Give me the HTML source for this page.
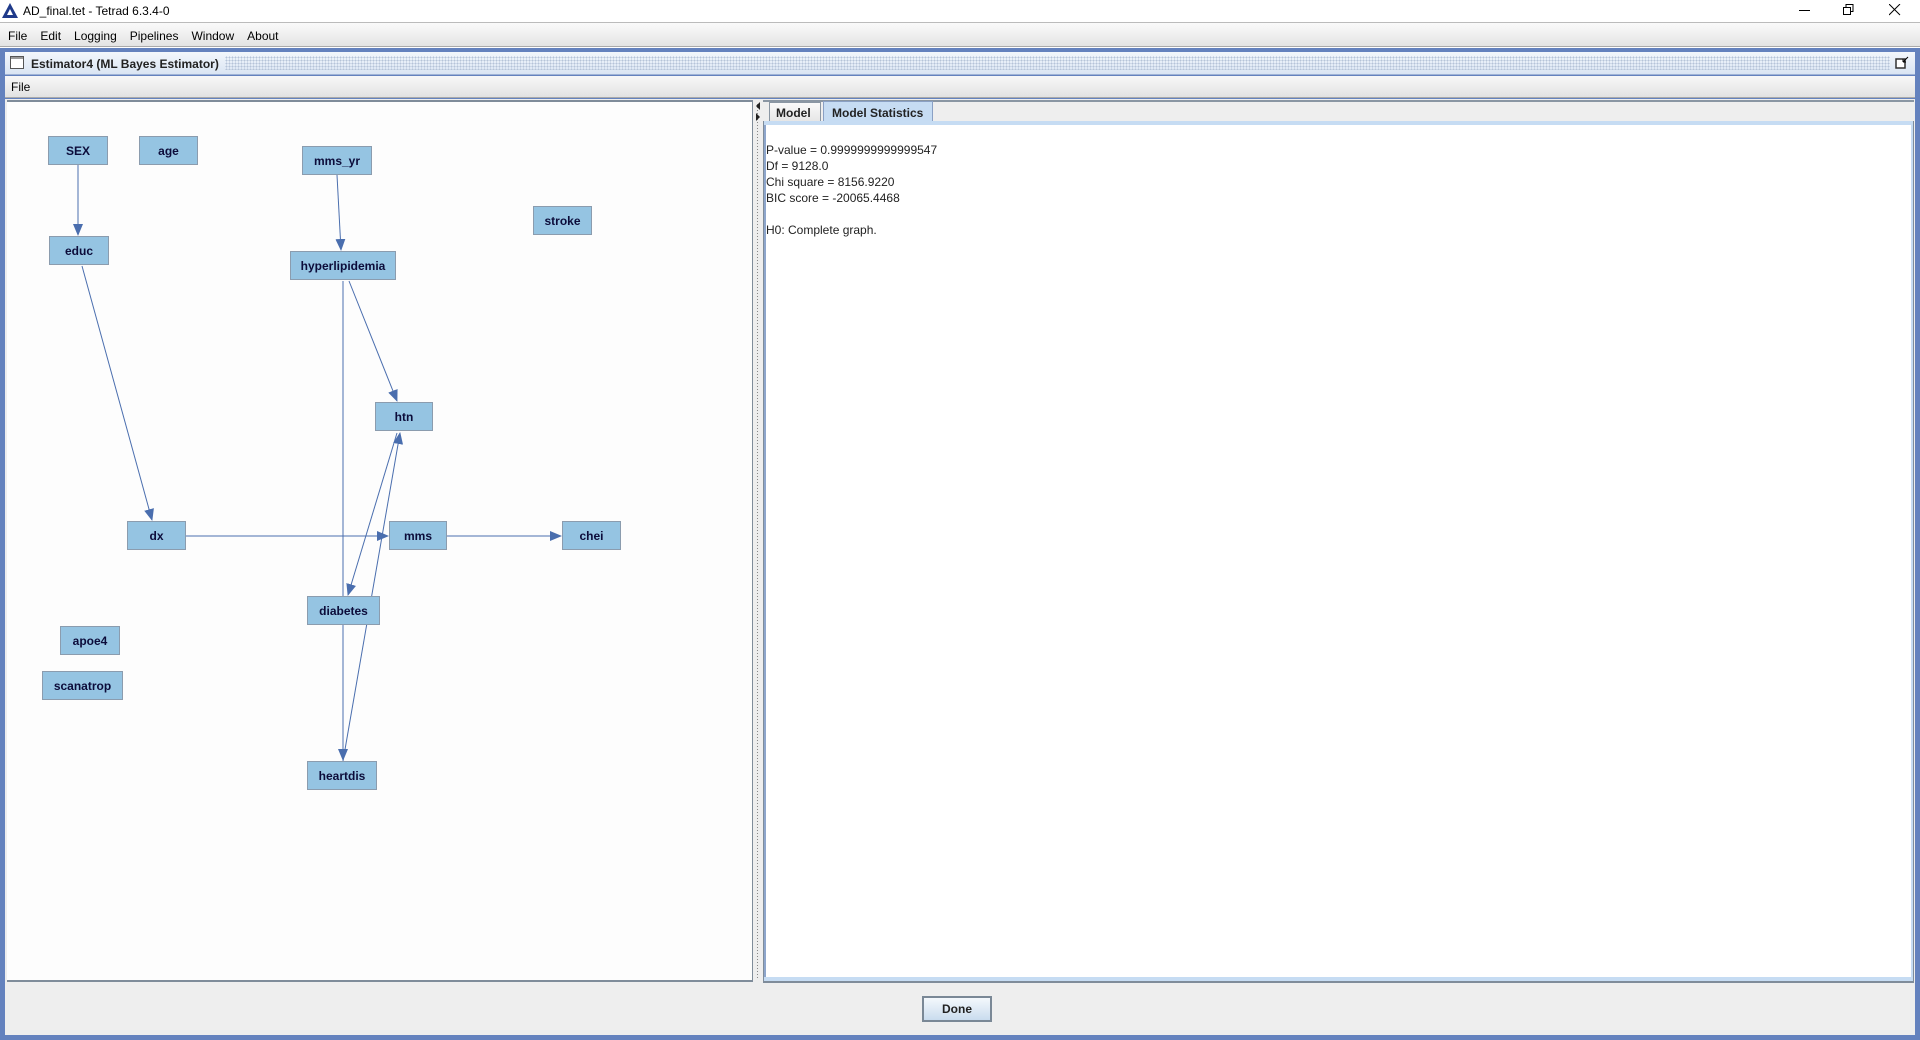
<!DOCTYPE html>
<html><head><meta charset="utf-8"><style>
*{margin:0;padding:0;box-sizing:border-box}
body{width:1920px;height:1040px;overflow:hidden;background:#fff;font-family:"Liberation Sans",Arial,sans-serif;position:relative}
.abs{position:absolute}
.menu span{margin-right:13px}
.node{position:absolute;background:#95c4e2;border:1px solid #8b9cae;color:#0c0c3a;font-weight:bold;font-size:12px;display:flex;align-items:center;justify-content:center}
</style></head><body>
<!-- title bar -->
<div class="abs" style="left:0;top:0;width:1920px;height:22px;background:#fff"></div>
<svg class="abs" style="left:2px;top:3px" width="16" height="15"><polygon points="8,0 16,15 0,15" fill="#1f3a8a"/><polygon points="8,6 11,12 5,12" fill="#fff"/></svg>
<div class="abs" style="left:23px;top:4px;font-size:12px;color:#000">AD_final.tet - Tetrad 6.3.4-0</div>
<div class="abs" style="left:1799px;top:10px;width:11px;height:1px;background:#000"></div>
<svg class="abs" style="left:1843px;top:4px" width="12" height="12"><rect x="0.5" y="3.5" width="7" height="7" fill="none" stroke="#000"/><path d="M3 3.5V0.5h7v7H7.5" fill="none" stroke="#000"/></svg>
<svg class="abs" style="left:1889px;top:4px" width="12" height="12"><path d="M0 0L11 11M11 0L0 11" stroke="#000"/></svg>
<!-- menubar -->
<div class="abs menu" style="left:0;top:22px;width:1920px;height:25px;background:linear-gradient(#fafafa,#e4e4e4);border-top:1px solid #bbb;border-bottom:1px solid #aaa;font-size:12px;padding:6px 0 0 8px"><span>File</span><span>Edit</span><span>Logging</span><span>Pipelines</span><span>Window</span><span>About</span></div>
<!-- internal frame -->
<div class="abs" style="left:0;top:48px;width:1920px;height:992px;background:#6482be"></div>
<div class="abs" style="left:5px;top:52px;width:1910px;height:23px;background:linear-gradient(#f3f7fc,#dae5f3);border-bottom:1px solid #9fb3d6"></div>
<div class="abs" style="left:225px;top:56px;width:1665px;height:14px;background-image:radial-gradient(#b5c3d8 0.8px,transparent 1px);background-size:3px 3px"></div>
<svg class="abs" style="left:10px;top:56px" width="15" height="14"><rect x="0.5" y="0.5" width="13" height="12" fill="#fff" stroke="#555"/><rect x="1" y="1" width="12" height="2" fill="#999"/></svg>
<div class="abs" style="left:31px;top:57px;font-size:12px;font-weight:bold;color:#222">Estimator4 (ML Bayes Estimator)</div>
<svg class="abs" style="left:1895px;top:55px" width="15" height="15"><rect x="1" y="4" width="9" height="9" fill="#fff" stroke="#333" stroke-width="1.5"/><path d="M8 7L13 2M8 7h3M8 7v-3" stroke="#000" fill="none"/></svg>
<div class="abs" style="left:5px;top:76px;width:1910px;height:22px;background:linear-gradient(#f8f8f8,#e2e2e2);border-bottom:1px solid #aaa;font-size:12px;padding:4px 0 0 6px">File</div>
<div class="abs" style="left:5px;top:99px;width:1910px;height:936px;background:#eeeeee"></div>
<!-- left graph panel -->
<div class="abs" style="left:7px;top:100px;width:746px;height:882px;background:#fdfdfd;border-top:2px solid #7f8c9a;border-bottom:2px solid #7f8c9a;border-right:1px solid #7f8c9a"></div>
<div class="abs" style="left:756px;top:103px;width:3px;height:875px;background-image:radial-gradient(#888 0.6px,transparent 0.8px);background-size:3px 3px"></div>
<svg class="abs" style="left:755px;top:102px" width="6" height="20"><path d="M5 0L1 4L5 8Z" fill="#222"/><path d="M1 11L5 15L1 19Z" fill="#222"/></svg>
<svg class="abs" style="left:7px;top:100px" width="746" height="880" viewBox="7 100 746 880">
<defs><marker id="a" markerWidth="12" markerHeight="12" refX="11" refY="5" orient="auto" markerUnits="userSpaceOnUse"><path d="M0,0L12,5L0,10Z" fill="#4a6eae"/></marker></defs>
<g stroke="#4a6eae" stroke-width="1" fill="none" marker-end="url(#a)">
<line x1="78" y1="165" x2="78" y2="235"/>
<line x1="337" y1="175" x2="341" y2="250"/>
<line x1="82" y1="266" x2="152" y2="520"/>
<line x1="349" y1="281" x2="397" y2="401"/>
<line x1="343" y1="281" x2="343" y2="760"/>
<line x1="397" y1="433" x2="348" y2="595"/>
<line x1="343" y1="761" x2="400" y2="433"/>
<line x1="186" y1="536" x2="388" y2="536"/>
<line x1="447" y1="536" x2="561" y2="536"/>
</g></svg>
<div class="node" style="left:48px;top:136px;width:60px;height:29px">SEX</div>
<div class="node" style="left:139px;top:136px;width:59px;height:29px">age</div>
<div class="node" style="left:302px;top:146px;width:70px;height:29px">mms_yr</div>
<div class="node" style="left:533px;top:206px;width:59px;height:29px">stroke</div>
<div class="node" style="left:49px;top:236px;width:60px;height:29px">educ</div>
<div class="node" style="left:290px;top:251px;width:106px;height:29px">hyperlipidemia</div>
<div class="node" style="left:375px;top:402px;width:58px;height:29px">htn</div>
<div class="node" style="left:127px;top:521px;width:59px;height:29px">dx</div>
<div class="node" style="left:389px;top:521px;width:58px;height:29px">mms</div>
<div class="node" style="left:562px;top:521px;width:59px;height:29px">chei</div>
<div class="node" style="left:307px;top:596px;width:73px;height:29px">diabetes</div>
<div class="node" style="left:60px;top:626px;width:60px;height:29px">apoe4</div>
<div class="node" style="left:42px;top:671px;width:81px;height:29px">scanatrop</div>
<div class="node" style="left:307px;top:761px;width:70px;height:29px">heartdis</div>
<!-- right panel -->
<div class="abs" style="left:763px;top:100px;width:1151px;height:2px;background:#8a96a3"></div>
<div class="abs" style="left:769px;top:102px;width:52px;height:19px;border:1px solid #8a96a3;border-bottom:none;background:linear-gradient(#fafafa,#e6e6e6);font-size:12px;font-weight:bold;padding:3px 0 0 6px;color:#222">Model</div>
<div class="abs" style="left:823px;top:101px;width:110px;height:21px;border:1px solid #8aa0c4;border-bottom:none;background:#c6dcf3;font-size:12px;font-weight:bold;padding:4px 0 0 8px;color:#222">Model Statistics</div>
<div class="abs" style="left:763px;top:121px;width:1151px;height:862px;background:#c6dcf3;border-left:1px solid #7f8c9a;border-right:1px solid #7f8c9a;border-bottom:2px solid #7f8c9a"></div>
<div class="abs" style="left:764px;top:125px;width:1147px;height:852px;background:#fff;border-left:2px solid #8ea6cc"></div>
<div class="abs" style="left:766px;top:142px;font-size:12px;line-height:16px;color:#222">P-value = 0.9999999999999547<br>Df = 9128.0<br>Chi square = 8156.9220<br>BIC score = -20065.4468<br><br>H0: Complete graph.</div>
<!-- done -->
<div class="abs" style="left:922px;top:996px;width:70px;height:26px;border:2px solid #7a8896;background:linear-gradient(#f4f8fc,#c9dcee);font-size:12px;font-weight:bold;color:#222;text-align:center;line-height:22px">Done</div>
</body></html>
